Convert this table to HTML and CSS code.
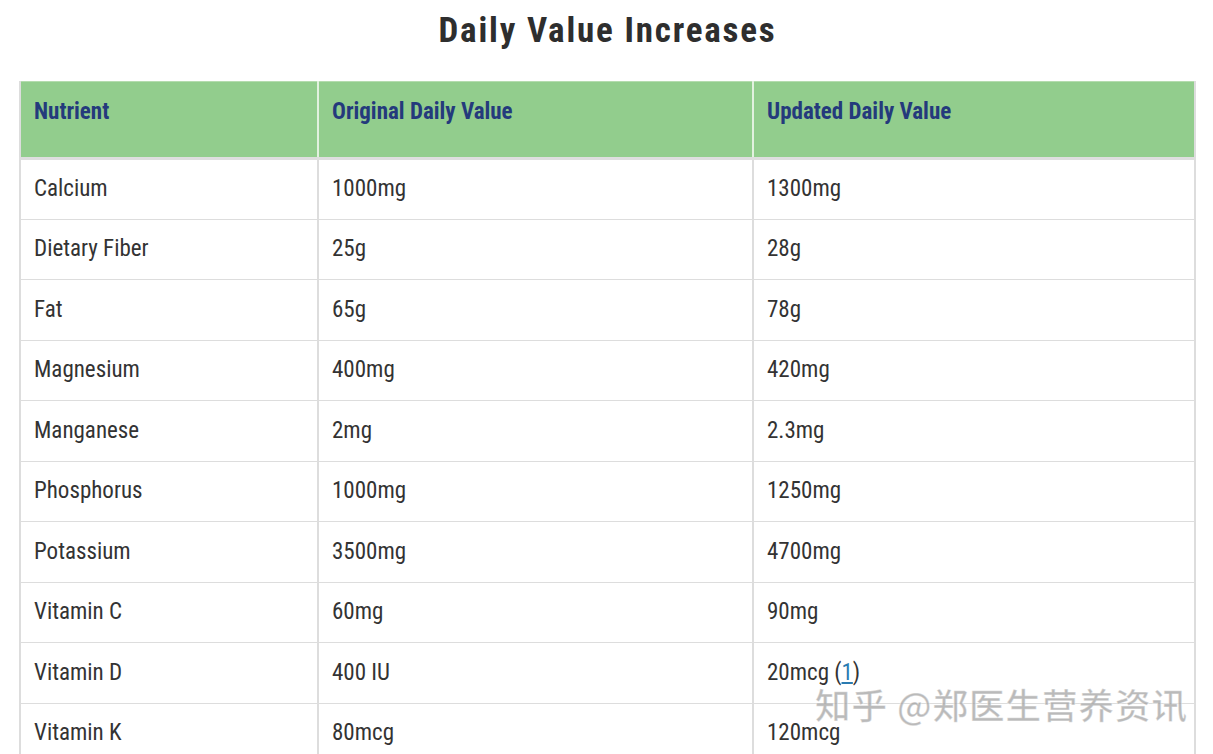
FILE: index.html
```html
<!DOCTYPE html>
<html lang="en">
<head>
<meta charset="utf-8">
<title>Daily Value Increases</title>
<link rel="stylesheet" href="styles.css">
</head>
<body>
<div class="page">
  <h2 class="title">Daily Value Increases</h2>
  <table class="dv">
    <thead>
      <tr><th class="c1">Nutrient</th><th class="c2">Original Daily Value</th><th class="c3">Updated Daily Value</th></tr>
    </thead>
    <tbody>
      <tr><td>Calcium</td><td>1000mg</td><td>1300mg</td></tr>
      <tr><td>Dietary Fiber</td><td>25g</td><td>28g</td></tr>
      <tr><td>Fat</td><td>65g</td><td>78g</td></tr>
      <tr><td>Magnesium</td><td>400mg</td><td>420mg</td></tr>
      <tr><td>Manganese</td><td>2mg</td><td>2.3mg</td></tr>
      <tr><td>Phosphorus</td><td>1000mg</td><td>1250mg</td></tr>
      <tr><td>Potassium</td><td>3500mg</td><td>4700mg</td></tr>
      <tr><td>Vitamin C</td><td>60mg</td><td>90mg</td></tr>
      <tr><td>Vitamin D</td><td>400 IU</td><td>20mcg (<a class="ref" href="#">1</a>)</td></tr>
      <tr><td>Vitamin K</td><td>80mcg</td><td>120mcg</td></tr>
    </tbody>
  </table>
  <div class="watermark">知乎 @郑医生营养资讯</div>
</div>
</body>
</html>
```
FILE: styles.css
```css
html, body {
  margin: 0;
  padding: 0;
  background: #fff;
  overflow: hidden;
}
body {
  width: 1213px;
  height: 754px;
  font-family: "Roboto Condensed", Roboto, "Liberation Sans", sans-serif;
  font-stretch: condensed;
  color: #333;
}
.page {
  position: relative;
  height: 754px;
  padding: 0 17px 0 19px;
}
.title {
  margin: 0;
  padding-top: 8px;
  height: 81px;
  box-sizing: border-box;
  text-align: center;
  font-size: 35px;
  line-height: 46px;
  letter-spacing: 1.8px;
  font-weight: 700;
  color: #2e2e2e;
}
.dv {
  width: 1177px;
  border-collapse: collapse;
  table-layout: fixed;
  border-left: 2px solid #ddd;
  border-right: 2px solid #ddd;
}
.dv th, .dv td { box-sizing: border-box; }
.dv .c1 { width: 298px; }
.dv .c2 { width: 435px; }
.dv th {
  background: #92cd8d;
  color: #243a7c;
  font-weight: 700;
  font-size: 23px;
  text-align: left;
  line-height: 28px;
  height: 77px;
  padding: 16px 13px 29px;
  vertical-align: top;
  border-top: 1px solid #b4dcae;
  border-left: 2px solid #e2f1df;
  border-bottom: 3px solid #dedede;
}
.dv th.c1 { border-left: 2px solid #ddd; }
.dv td {
  font-size: 23px;
  line-height: 28px;
  height: 60.5px;
  padding: 0 13px;
  vertical-align: middle;
  border-left: 2px solid #ddd;
  border-bottom: 1px solid #ddd;
  color: #333;
}
.ref {
  color: #2a7bb1;
  text-decoration: underline;
}
.watermark {
  position: absolute;
  left: 815px;
  top: 686px;
  font-family: "Noto Sans CJK SC", sans-serif;
  font-size: 35.5px;
  font-weight: 500;
  line-height: 36px;
  letter-spacing: 1px;
  color: rgba(160, 160, 160, 0.72);
  -webkit-text-stroke: 1px rgba(255, 255, 255, 0.45);
  white-space: nowrap;
}
```
